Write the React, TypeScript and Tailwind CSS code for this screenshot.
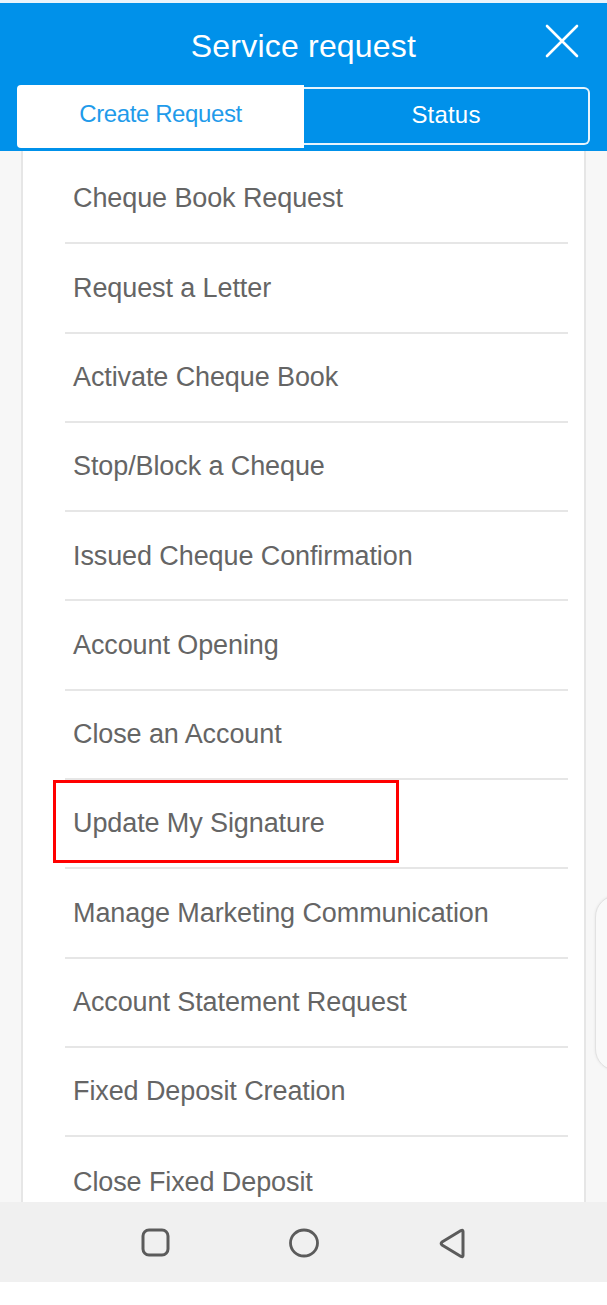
import React from 'react';

const items = [
  'Cheque Book Request',
  'Request a Letter',
  'Activate Cheque Book',
  'Stop/Block a Cheque',
  'Issued Cheque Confirmation',
  'Account Opening',
  'Close an Account',
  'Update My Signature',
  'Manage Marketing Communication',
  'Account Statement Request',
  'Fixed Deposit Creation',
  'Close Fixed Deposit',
];

function CloseIcon() {
  return (
    <svg width="34" height="34" viewBox="0 0 34 34" fill="none">
      <path d="M2 2L32 32M32 2L2 32" stroke="white" strokeWidth="2.6" strokeLinecap="round" />
    </svg>
  );
}

function NavBar() {
  return (
    <div className="h-[80px] bg-[#f0f0f0] flex items-center relative">
      <svg className="absolute left-[141px] top-[26px]" width="29" height="29" viewBox="0 0 29 29" fill="none">
        <rect x="2" y="2" width="25" height="25" rx="6" stroke="#5b5b5b" strokeWidth="3" />
      </svg>
      <svg className="absolute left-[288px] top-[26px]" width="32" height="30" viewBox="0 0 32 30" fill="none">
        <ellipse cx="16" cy="15" rx="13.5" ry="13" stroke="#5b5b5b" strokeWidth="2.8" />
      </svg>
      <svg className="absolute left-[436px] top-[24px]" width="32" height="34" viewBox="0 0 32 34" fill="none">
        <path d="M27 5.5L27 29.5Q27 31.5 25 30.5L6 19Q4.5 17.5 6 16L25 4.5Q27 3.5 27 5.5Z" stroke="#5b5b5b" strokeWidth="3" strokeLinejoin="round" />
      </svg>
    </div>
  );
}

export default function App() {
  return (
    <div className="w-[607px] h-[1305px] bg-white flex flex-col overflow-hidden" style={{ fontFamily: '"Liberation Sans", Arial, sans-serif' }}>
      <div className="h-[3px] bg-[#eaf4fc]" />
      <div className="h-[148px] bg-[#0091ea] relative flex flex-col">
        <div className="h-[82px] pt-[4px] flex items-center justify-center">
          <h1 className="text-white text-[32px] font-normal tracking-[0.2px]">Service request</h1>
        </div>
        <button className="absolute right-[28px] top-[21px]">
          <CloseIcon />
        </button>
        <div className="flex pl-[17px] pr-[17px]">
          <div className="w-[287px] h-[63px] pb-[5px] bg-white rounded-l-[4px] flex items-center justify-center">
            <span className="text-[#1f9bea] text-[24px] tracking-[-0.4px]">Create Request</span>
          </div>
          <div className="w-[286px] h-[58px] mt-[2px] pb-[2px] border-2 border-l-0 border-white/90 rounded-r-[6px] flex items-center justify-center">
            <span className="text-white text-[24px] tracking-[0.2px]">Status</span>
          </div>
        </div>
      </div>
      <div className="flex-1 bg-[#f7f7f7] px-[21px] overflow-hidden relative">
        <div className="h-full bg-white border-x-2 border-[#e6e6e6] pt-[4px] pl-[42px] pr-[16px]">
          {items.map((item, i) => (
            <div
              key={item}
              className={`relative h-[89.3px] flex items-center pl-[8px] ${i < items.length - 1 ? 'border-b-2 border-[#e6e6e6]' : ''}`}
            >
              <span className="text-[#656565] text-[27px] tracking-[-0.1px]">{item}</span>
              {item === 'Update My Signature' && (
                <div className="absolute left-[-12px] top-[0px] w-[346px] h-[83px] border-[3px] border-[#ff0000]" />
              )}
            </div>
          ))}
        </div>
        <div className="absolute right-[-14px] top-[744px] w-[26px] h-[176px] rounded-l-[22px] border border-[#e2e2e2] bg-[#f9f9f9] shadow-[0_0_3px_rgba(0,0,0,0.08)]" />
      </div>
      <NavBar />
      <div className="h-[23px] bg-white" />
    </div>
  );
}
